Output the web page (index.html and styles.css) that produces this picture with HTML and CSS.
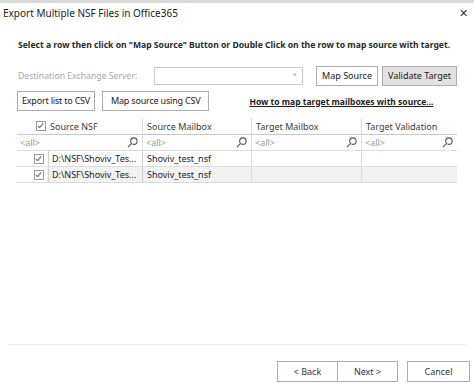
FILE: index.html
```html
<!DOCTYPE html>
<html lang="en">
<head>
	<meta charset="UTF-8">
	<title>Export Multiple NSF Files in Office365</title>
	<link rel="stylesheet" href="styles.css">
</head>
<body>
	<div class="top_strip"></div>
	<div class="title_bar">
		<span class="title">Export Multiple NSF Files in Office365</span>
		<span class="close">&#x2715;</span>
	</div>

	<div class="content">
		<p class="hint">Select a row then click on "Map Source" Button or Double Click on the row to map source with target.</p>

		<div class="row row_server">
			<span class="label_off">Destination Exchange Server:</span>
			<div class="combo"><span class="combo_arrow">&#x25BE;</span></div>
			<div class="btn">Map Source</div>
			<div class="btn btn_gray">Validate Target</div>
		</div>

		<div class="row row_csv">
			<div class="btn">Export list to CSV</div>
			<div class="btn btn_wide">Map source using CSV</div>
			<a class="how_link" href="#">How to map target mailboxes with source...</a>
		</div>

		<div class="grid">
			<div class="cell head first"><span class="chk"></span>Source NSF</div>
			<div class="cell head">Source Mailbox</div>
			<div class="cell head">Target Mailbox</div>
			<div class="cell head">Target Validation</div>

			<div class="cell filter">&lt;all&gt;<svg class="lens" viewBox="0 0 12 12"><circle cx="7.5" cy="4.5" r="3.5"/><line x1="5" y1="7" x2="1" y2="11"/></svg></div>
			<div class="cell filter">&lt;all&gt;<svg class="lens" viewBox="0 0 12 12"><circle cx="7.5" cy="4.5" r="3.5"/><line x1="5" y1="7" x2="1" y2="11"/></svg></div>
			<div class="cell filter">&lt;all&gt;<svg class="lens" viewBox="0 0 12 12"><circle cx="7.5" cy="4.5" r="3.5"/><line x1="5" y1="7" x2="1" y2="11"/></svg></div>
			<div class="cell filter">&lt;all&gt;<svg class="lens" viewBox="0 0 12 12"><circle cx="7.5" cy="4.5" r="3.5"/><line x1="5" y1="7" x2="1" y2="11"/></svg></div>

			<div class="cell data first"><span class="chk"></span><span class="path">D:\NSF\Shoviv_Tes...</span></div>
			<div class="cell data">Shoviv_test_nsf</div>
			<div class="cell data"></div>
			<div class="cell data"></div>

			<div class="cell data first alt"><span class="chk"></span><span class="path">D:\NSF\Shoviv_Tes...</span></div>
			<div class="cell data alt">Shoviv_test_nsf</div>
			<div class="cell data alt"></div>
			<div class="cell data alt"></div>
		</div>
	</div>

	<div class="footer">
		<div class="btn btn_foot">&lt; Back</div>
		<div class="btn btn_foot btn_next">Next &gt;</div>
		<div class="btn btn_foot btn_cancel">Cancel</div>
	</div>
</body>
</html>
```

FILE: styles.css
```css
body,p{
	margin:0;
	padding:0;
}

body{
	width:474px;
	height:384px;
	background-color:#fff;
	font-family:"Noto Sans", "Open Sans", sans-serif;
	font-size:9px;
	color:#1e1e1e;
	overflow:hidden;
	display:flex;
	flex-direction:column;
}

.top_strip{
	height:3px;
	background-color:#d9d9d9;
}

.title_bar{
	height:19px;
	display:flex;
	align-items:center;
	justify-content:space-between;
	padding:0 6px 0 3px;
}

.title{
	font-size:10px;
	color:#222;
}

.close{
	font-size:11px;
	color:#333;
}

.content{
	padding:0 17px 0 17px;
	display:flex;
	flex-direction:column;
}

.hint{
	margin:17px 0 0 1px;
	font-size:8.6px;
	font-weight:bold;
	color:#2a2a2a;
	white-space:nowrap;
}

.row{
	display:flex;
	align-items:center;
}

.row_server{
	margin-top:15px;
	height:20px;
}

.label_off{
	color:#a8a8a8;
	width:136px;
	padding-left:1px;
	font-size:8.7px;
}

.combo{
	width:148px;
	height:16px;
	border:1px solid #c9c9c9;
	margin-right:13px;
	position:relative;
}

.combo_arrow{
	position:absolute;
	right:5px;
	top:2px;
	font-size:7px;
	color:#c4c4c4;
}

.btn{
	height:18px;
	line-height:18px;
	border:1px solid #adadad;
	background-color:#fff;
	padding:0 5px;
	color:#222;
	white-space:nowrap;
}

.btn_gray{
	background-color:#e1e1e1;
	margin-left:4px;
}

.row_csv{
	margin-top:5px;
	height:20px;
	gap:7px;
}

.row_csv .btn{
	padding:0 4px;
	letter-spacing:-0.2px;
}

.row_csv .btn_wide{
	padding:0 8px;
}

.how_link{
	margin-left:33px;
	font-size:8.5px;
	font-weight:bold;
	color:#1e1e1e;
	text-decoration:underline;
}

.grid{
	margin-top:7px;
	width:440px;
	display:grid;
	grid-template-columns:126px 109px 110px 95px;
}

.cell{
	height:15px;
	line-height:15px;
	border-right:1px solid #dcdcdc;
	border-bottom:1px solid #dcdcdc;
	padding-left:4px;
	display:flex;
	align-items:center;
	white-space:nowrap;
	overflow:hidden;
	position:relative;
}

.cell:nth-child(4n){
	border-right:none;
}

.head{
	height:16px;
	color:#3a3a3a;
	border-bottom-color:#c8c8c8;
}

.head.first{
	padding-left:19px;
}

.filter{
	color:#9a9a9a;
	padding-left:3px;
	justify-content:space-between;
	padding-right:4px;
}

.filter.first{
	padding-left:5px;
}

.lens{
	width:11px;
	height:11px;
	fill:none;
	stroke:#555;
	stroke-width:1.2;
}

.data{
	color:#222;
}

.data.first{
	padding-left:17px;
	border-right-color:#cfcfcf;
}

.path{
	border-left:1px solid #d0d0d0;
	padding-left:3px;
	height:15px;
}

.alt{
	background-color:#f2f2f2;
}

.data.first.alt{
	background:linear-gradient(to right, #fff 30px, #f2f2f2 30px);
}

.chk{
	width:8px;
	height:8px;
	border:1px solid #9a9a9a;
	margin-right:4px;
	flex-shrink:0;
	position:relative;
	background-color:#fff;
}

.chk::after{
	content:"";
	position:absolute;
	left:2px;
	top:0;
	width:2px;
	height:5px;
	border-right:1px solid #666;
	border-bottom:1px solid #666;
	transform:rotate(40deg);
}

.footer{
	margin:auto 8px 2px 8px;
	border-top:1px solid #ececec;
	padding-top:16px;
	display:flex;
	justify-content:flex-end;
}

.btn_foot{
	width:59px;
	height:19px;
	line-height:19px;
	padding:0;
	text-align:center;
	color:#333;
}

.btn_next{
	border-left:none;
	margin-right:9px;
}

.btn_cancel{
	margin-right:-4px;
	width:61px;
}
```
